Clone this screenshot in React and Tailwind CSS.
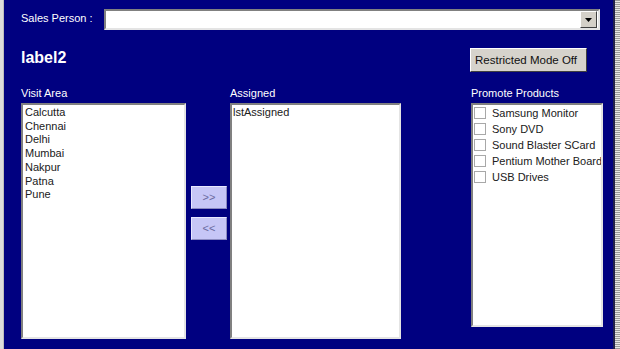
const visitAreas = ['Calcutta', 'Chennai', 'Delhi', 'Mumbai', 'Nakpur', 'Patna', 'Pune'];
const products = ['Samsung Monitor', 'Sony DVD', 'Sound Blaster SCard', 'Pentium Mother Board', 'USB Drives'];

const sunken =
  'border-2 border-t-[#808080] border-l-[#808080] border-b-[#e4e4e4] border-r-[#e4e4e4] bg-white';
const raised =
  'border border-t-white border-l-white border-b-[#404040] border-r-[#404040]';

function ArrowButton({ children }) {
  return (
    <button className="w-[36px] h-[23px] bg-[#c6c6f6] text-[#6a6aa0] text-[11px] leading-none border border-t-[#e8e8ff] border-l-[#e8e8ff] border-b-[#8a8ac0] border-r-[#8a8ac0]">
      {children}
    </button>
  );
}

export default function App() {
  return (
    <div className="w-[620px] h-[349px] flex overflow-hidden font-['Liberation_Sans',Arial,sans-serif] text-[11px] leading-[13px]">
      {/* left window edge */}
      <div className="w-[4px] bg-[#dcdcdc] border-r border-[#bcbcbc]" />

      <div className="w-[609px] bg-[#000080] pl-[17px] flex flex-col">
        {/* sales person */}
        <div className="flex items-start pt-[9px]">
          <span className="w-[83px] mt-[3px] text-white">Sales Person :</span>
          <div className={`w-[496px] h-[21px] ${sunken} flex justify-end items-center pr-[1px]`}>
            <div className={`w-[17px] h-[17px] bg-[#d4d0c8] ${raised} flex items-center justify-center`}>
              <svg width="7" height="4" viewBox="0 0 7 4">
                <path d="M0 0h7L3.5 4z" fill="#000" />
              </svg>
            </div>
          </div>
        </div>

        {/* label2 + restricted mode */}
        <div className="flex items-start mt-[18px] h-[24px]">
          <span className="w-[449px] mt-[2px] text-white font-bold text-[16px] leading-[16px]">label2</span>
          <button className={`w-[117px] h-[24px] bg-[#d6d3cc] ${raised} text-[#101010] text-left pl-[4px] text-[11.5px]`}>
            Restricted Mode Off
          </button>
        </div>

        {/* lists */}
        <div className="flex items-start mt-[15px]">
          <div className="flex flex-col w-[165px]">
            <span className="text-white">Visit Area</span>
            <div className={`mt-[3px] h-[236px] ${sunken} pt-[1px] pl-[2px] text-[#202020]`}>
              {visitAreas.map((a) => (
                <div key={a} className="leading-[13.7px]">{a}</div>
              ))}
            </div>
          </div>

          <div className="flex flex-col gap-[8px] ml-[5px] mt-[99px]">
            <ArrowButton>&gt;&gt;</ArrowButton>
            <ArrowButton>&lt;&lt;</ArrowButton>
          </div>

          <div className="flex flex-col w-[171px] ml-[3px]">
            <span className="text-white">Assigned</span>
            <div className={`mt-[3px] h-[236px] ${sunken} pt-[1px] pl-[1px] text-[#202020]`}>
              <div className="leading-[13.7px]">lstAssigned</div>
            </div>
          </div>

          <div className="flex flex-col w-[132px] ml-[70px]">
            <span className="text-white">Promote Products</span>
            <div className={`mt-[3px] h-[224px] ${sunken} pl-[1px] text-[#202020] overflow-hidden`}>
              {products.map((p) => (
                <div key={p} className="flex items-center h-[16px] whitespace-nowrap">
                  <span className="w-[12px] h-[12px] border border-[#a8a8a8] bg-white shrink-0" />
                  <span className="ml-[6px] leading-[16px]">{p}</span>
                </div>
              ))}
            </div>
          </div>
        </div>
      </div>

      {/* right window edge */}
      <div className="w-[2px] bg-[#20204a]" />
      <div className="w-[5px] bg-[repeating-linear-gradient(0deg,#9a9a9a_0px,#9a9a9a_1px,#e6e6e6_1px,#e6e6e6_2px)]" />
    </div>
  );
}
